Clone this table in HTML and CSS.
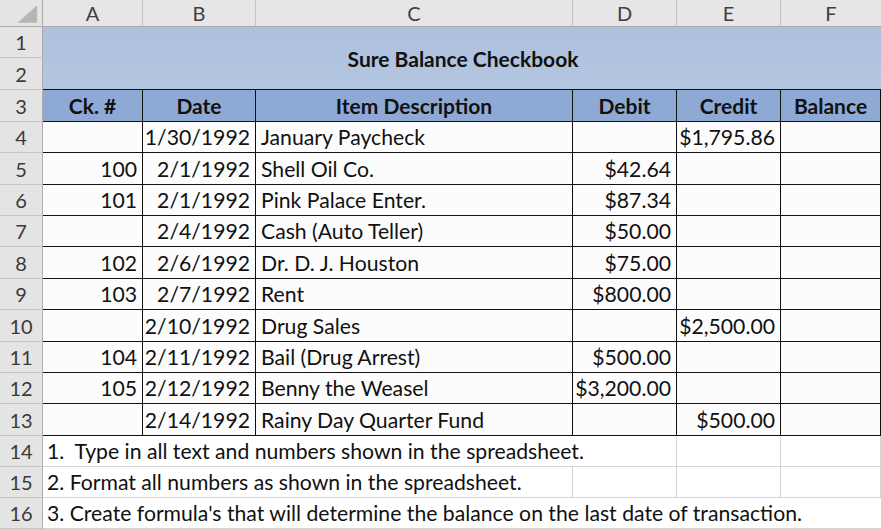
FILE: index.html
```html
<!DOCTYPE html>
<html>
<head>
<meta charset="utf-8">
<link rel="stylesheet" href="styles.css">
</head>
<body>
<div class="sheet">
  <div class="corner"><svg width="43" height="27" viewBox="0 0 43 27"><polygon points="38,5 38,23 18,23" fill="#b5b5b5"/></svg></div>
  <div class="colhead">A</div>
  <div class="colhead">B</div>
  <div class="colhead">C</div>
  <div class="colhead">D</div>
  <div class="colhead">E</div>
  <div class="colhead last">F</div>

  <div class="rowhead">1</div>
  <div class="title">Sure Balance Checkbook</div>
  <div class="rowhead">2</div>

  <div class="rowhead">3</div>
  <div class="cell th">Ck. #</div>
  <div class="cell th">Date</div>
  <div class="cell th">Item Description</div>
  <div class="cell th">Debit</div>
  <div class="cell th">Credit</div>
  <div class="cell th">Balance</div>

  <div class="rowhead">4</div>
  <div class="cell num"></div>
  <div class="cell num">1/30/1992</div>
  <div class="cell">January Paycheck</div>
  <div class="cell num"></div>
  <div class="cell num">$1,795.86</div>
  <div class="cell"></div>

  <div class="rowhead">5</div>
  <div class="cell num">100</div>
  <div class="cell num">2/1/1992</div>
  <div class="cell">Shell Oil Co.</div>
  <div class="cell num">$42.64</div>
  <div class="cell num"></div>
  <div class="cell"></div>

  <div class="rowhead">6</div>
  <div class="cell num">101</div>
  <div class="cell num">2/1/1992</div>
  <div class="cell">Pink Palace Enter.</div>
  <div class="cell num">$87.34</div>
  <div class="cell num"></div>
  <div class="cell"></div>

  <div class="rowhead">7</div>
  <div class="cell num"></div>
  <div class="cell num">2/4/1992</div>
  <div class="cell">Cash (Auto Teller)</div>
  <div class="cell num">$50.00</div>
  <div class="cell num"></div>
  <div class="cell"></div>

  <div class="rowhead">8</div>
  <div class="cell num">102</div>
  <div class="cell num">2/6/1992</div>
  <div class="cell">Dr. D. J. Houston</div>
  <div class="cell num">$75.00</div>
  <div class="cell num"></div>
  <div class="cell"></div>

  <div class="rowhead">9</div>
  <div class="cell num">103</div>
  <div class="cell num">2/7/1992</div>
  <div class="cell">Rent</div>
  <div class="cell num">$800.00</div>
  <div class="cell num"></div>
  <div class="cell"></div>

  <div class="rowhead">10</div>
  <div class="cell num"></div>
  <div class="cell num">2/10/1992</div>
  <div class="cell">Drug Sales</div>
  <div class="cell num"></div>
  <div class="cell num">$2,500.00</div>
  <div class="cell"></div>

  <div class="rowhead">11</div>
  <div class="cell num">104</div>
  <div class="cell num">2/11/1992</div>
  <div class="cell">Bail (Drug Arrest)</div>
  <div class="cell num">$500.00</div>
  <div class="cell num"></div>
  <div class="cell"></div>

  <div class="rowhead">12</div>
  <div class="cell num">105</div>
  <div class="cell num">2/12/1992</div>
  <div class="cell">Benny the Weasel</div>
  <div class="cell num">$3,200.00</div>
  <div class="cell num"></div>
  <div class="cell"></div>

  <div class="rowhead">13</div>
  <div class="cell num"></div>
  <div class="cell num">2/14/1992</div>
  <div class="cell">Rainy Day Quarter Fund</div>
  <div class="cell num"></div>
  <div class="cell num">$500.00</div>
  <div class="cell"></div>

  <div class="rowhead">14</div>
  <div class="note span4">1.&nbsp; Type in all text and numbers shown in the spreadsheet.</div>
  <div class="note"></div>
  <div class="note"></div>

  <div class="rowhead">15</div>
  <div class="note span3">2. Format all numbers as shown in the spreadsheet.</div>
  <div class="note"></div>
  <div class="note"></div>
  <div class="note"></div>

  <div class="rowhead">16</div>
  <div class="note span6">3. Create formula's that will determine the balance on the last date of transaction.</div>
</div>
</body>
</html>
```

FILE: styles.css
```css
html, body {
  margin: 0;
  padding: 0;
  background: #ffffff;
}

.sheet {
  display: grid;
  grid-template-columns: 43px 100px 113px 317px 104px 104px 100px;
  grid-template-rows: 27px 31px 32px 32px 31px 32px 31px 31px 32px 31px 32px 31px 31px 32px 31px 31px 31px;
  width: 881px;
  height: 529px;
  overflow: hidden;
  font-family: Lato, "Open Sans", sans-serif;
  font-size: 21.2px;
  color: #111111;
}

.sheet > div {
  box-sizing: border-box;
  display: flex;
  align-items: center;
  white-space: nowrap;
  overflow: hidden;
}

.corner {
  background: #e4e4e4;
  border-right: 1px solid #ababab;
  border-bottom: 1px solid #ababab;
}

.corner svg {
  display: block;
}

.colhead {
  justify-content: center;
  background: #e6e6e6;
  color: #3f3f3f;
  border-right: 1px solid #c3c3c3;
  border-bottom: 1px solid #ababab;
  font-size: 20px;
}

.colhead.last {
  border-right: none;
}

.rowhead {
  justify-content: center;
  background: #e4e4e4;
  color: #3a3a3a;
  border-right: 1px solid #ababab;
  border-bottom: 1px solid #c6c6c6;
  font-size: 20px;
}

.title {
  grid-column: 2 / 8;
  grid-row: 2 / 4;
  justify-content: center;
  font-weight: bold;
  font-size: 21px;
  background: linear-gradient(#adc0dc, #b4c6e0);
  border-bottom: 1px solid #111111;
  padding-left: 2px;
}

.cell {
  padding: 0 5px;
  background: #fcfcfc;
  border-right: 1px solid #111111;
  border-bottom: 1px solid #111111;
}

.cell.th {
  justify-content: center;
  font-weight: bold;
  font-size: 21px;
  background: #8eaad4;
}

.cell.num {
  justify-content: flex-end;
}

.note {
  padding: 0 4px;
  background: #ffffff;
  border-right: 1px solid #d4d4d4;
  border-bottom: 1px solid #d4d4d4;
}

.span3 { grid-column: span 3; }
.span4 { grid-column: span 4; }
.span6 { grid-column: span 6; border-right: none; }
```
